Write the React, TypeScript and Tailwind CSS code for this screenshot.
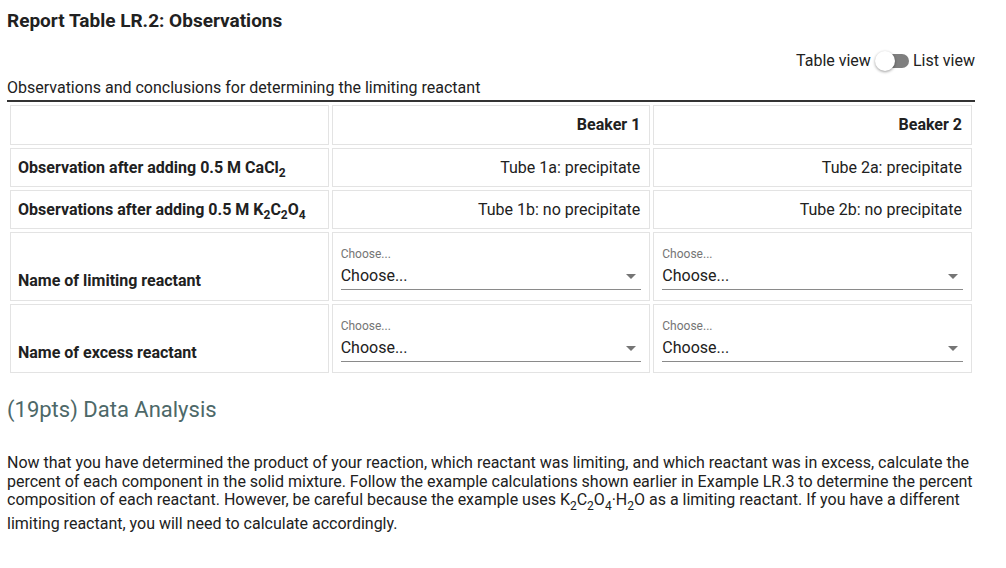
function Sub({ children }: { children: React.ReactNode }) {
  return <sub className="text-[12px] leading-none relative -bottom-[4px] align-baseline">{children}</sub>
}

// paragraph subscripts sit lower and push the line box down, like the source page
function PSub({ children }: { children: React.ReactNode }) {
  return <sub className="text-[12px] leading-[18px] static align-[-5px]">{children}</sub>
}

function SelectBox() {
  return (
    <div className="px-2 pb-2.5">
      <div className="text-[12px] text-[#757575] leading-none mb-[6px]">Choose...</div>
      <div className="flex items-center justify-between border-b border-[#8a8a8a] pb-[3px]">
        <span className="text-[16px] text-[#212121] leading-5">Choose...</span>
        <svg width="10" height="5" viewBox="0 0 10 5" className="mr-[5px]">
          <path d="M0 0 L10 0 L5 5 Z" fill="#757575" />
        </svg>
      </div>
    </div>
  )
}

export default function App() {
  const cell = 'border border-[#e3e3e3]'
  return (
    <div className="w-[1006px] h-[568px] bg-white text-[#212121] font-['Roboto',sans-serif] px-[7px] overflow-hidden">
      <h1 className="text-[19px] font-bold leading-6 pt-[9px]">Report Table LR.2: Observations</h1>

      <div className="flex justify-end items-center mt-[16px] pr-[24px] text-[16px] gap-[4px]">
        <span>Table view</span>
        <div className="relative w-[34px] h-[20px] flex items-center">
          <div className="absolute left-[6px] right-0 h-[14px] rounded-full bg-[#7f7f7f]" />
          <div className="absolute left-0 w-[20px] h-[20px] rounded-full bg-white shadow-[0_1px_3px_rgba(0,0,0,0.4)]" />
        </div>
        <span>List view</span>
      </div>

      <div className="w-[968px] mt-[5px]">
        <div className="text-[16px] leading-5 pb-[2px] border-b-[2px] border-[#333]">
          Observations and conclusions for determining the limiting reactant
        </div>
        <table className="w-full border-separate border-spacing-[3px] table-fixed text-[16px]">
          <tbody>
            <tr className="h-[40px]">
              <td className={cell}></td>
              <td className={`${cell} text-right pr-[9px] font-bold`}>Beaker 1</td>
              <td className={`${cell} text-right pr-[9px] font-bold`}>Beaker 2</td>
            </tr>
            <tr className="h-[39px]">
              <td className={`${cell} pl-[7px] font-bold`}>
                Observation after adding 0.5 M CaCl<Sub>2</Sub>
              </td>
              <td className={`${cell} text-right pr-[9px]`}>Tube 1a: precipitate</td>
              <td className={`${cell} text-right pr-[9px]`}>Tube 2a: precipitate</td>
            </tr>
            <tr className="h-[39px]">
              <td className={`${cell} pl-[7px] font-bold`}>
                Observations after adding 0.5 M K<Sub>2</Sub>C<Sub>2</Sub>O<Sub>4</Sub>
              </td>
              <td className={`${cell} text-right pr-[9px]`}>Tube 1b: no precipitate</td>
              <td className={`${cell} text-right pr-[9px]`}>Tube 2b: no precipitate</td>
            </tr>
            <tr className="h-[69px]">
              <td className={`${cell} pl-[7px] pb-[7px] font-bold align-bottom`}>Name of limiting reactant</td>
              <td className={`${cell} align-bottom`}><SelectBox /></td>
              <td className={`${cell} align-bottom`}><SelectBox /></td>
            </tr>
            <tr className="h-[69px]">
              <td className={`${cell} pl-[7px] pb-[7px] font-bold align-bottom`}>Name of excess reactant</td>
              <td className={`${cell} align-bottom`}><SelectBox /></td>
              <td className={`${cell} align-bottom`}><SelectBox /></td>
            </tr>
          </tbody>
        </table>
      </div>

      <h2 className="text-[22px] text-[#4d6868] leading-7 mt-[20px]">(19pts) Data Analysis</h2>

      <p className="text-[16px] leading-[18.5px] mt-[30px] w-[968px]">
        Now that you have determined the product of your reaction, which reactant was limiting, and which reactant
        was in excess, calculate the percent of each component in the solid mixture. Follow the example calculations
        shown earlier in Example LR.3 to determine the percent composition of each reactant. However, be careful
        because the example uses K<PSub>2</PSub>C<PSub>2</PSub>O<PSub>4</PSub>·H<PSub>2</PSub>O as a limiting
        reactant. If you have a different limiting reactant, you will need to calculate accordingly.
      </p>
    </div>
  )
}
